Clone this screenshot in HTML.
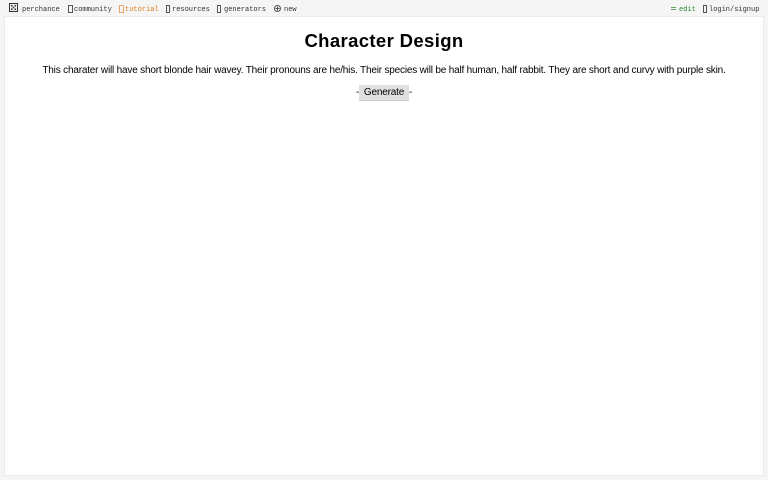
<!DOCTYPE html>
<html><head><meta charset="utf-8"><style>
html,body{margin:0;padding:0;width:768px;height:480px;overflow:hidden;background:#f5f5f5;font-family:"Liberation Sans",sans-serif;color:#000}
.card{position:absolute;left:4px;top:16px;width:758px;height:458px;background:#fff;border:1px solid #e8e8e8;border-top-color:#ececec}
.n{position:absolute;top:4px;font:7px/10px "Liberation Mono",monospace;color:#333;white-space:nowrap;padding-top:.5px}
.t{position:absolute;top:5px;width:3px;height:6px;border:1px solid #555}
h1{position:absolute;left:0;top:30px;width:768px;margin:0;text-align:center;font:bold 18.5px/22px "Liberation Sans",sans-serif;letter-spacing:.37px}
p{position:absolute;left:0;top:64px;width:768px;margin:0;text-align:center;font-size:10px;line-height:13px;letter-spacing:-.187px;white-space:nowrap}
.d{position:absolute;top:86px;font-size:10px;line-height:13px;color:#000}
.b{position:absolute;left:359px;top:85px;width:50px;height:14px;padding-top:1px;background:#e0e0e0;border-bottom:1px solid #ccc;text-align:center;font-size:10px;line-height:14px;letter-spacing:-.187px}
</style></head><body>
<div class="card"></div>
<svg style="position:absolute;left:9px;top:3px" width="10" height="10" viewBox="0 0 10 10"><rect x=".5" y=".5" width="8" height="8" fill="#f0f0f0" stroke="#333"/><g fill="#333"><rect x="2" y="2" width="1.5" height="1.5"/><rect x="5.5" y="2" width="1.5" height="1.5"/><rect x="3.7" y="3.8" width="1.5" height="1.5"/><rect x="2" y="5.5" width="1.5" height="1.5"/><rect x="5.5" y="5.5" width="1.5" height="1.5"/></g></svg>
<span class="n" style="left:22px">perchance</span>
<span class="t" style="left:68px"></span><span class="n" style="left:74px">community</span>
<span class="t" style="left:119px;border-color:#e9a468"></span><span class="n" style="left:125px;color:#e07b20">tutorial</span>
<span class="t" style="left:166px;width:2px"></span><span class="n" style="left:172px">resources</span>
<span class="t" style="left:217px;width:2px"></span><span class="n" style="left:224px">generators</span>
<svg style="position:absolute;left:274px;top:5px" width="7" height="7" viewBox="0 0 7 7"><circle cx="3.5" cy="3.5" r="3" fill="none" stroke="#555"/><path d="M3.5 1.5v4M1.5 3.5h4" stroke="#555"/></svg>
<span class="n" style="left:284px">new</span>
<svg style="position:absolute;left:671px;top:7px" width="6" height="3" viewBox="0 0 6 3"><path d="M0 .5h5M0 2.5h5" stroke="#5aa55a"/></svg><span class="n" style="left:679px;color:#2a8a2a">edit</span>
<span class="t" style="left:703px;width:2px"></span><span class="n" style="left:709px">login/signup</span>
<h1>Character Design</h1>
<p>This charater will have short blonde hair wavey. Their pronouns are he/his. Their species will be half human, half rabbit. They are short and curvy with purple skin.</p>
<span class="d" style="left:356px">-</span><div class="b">Generate</div><span class="d" style="left:409px">-</span>
</body></html>
